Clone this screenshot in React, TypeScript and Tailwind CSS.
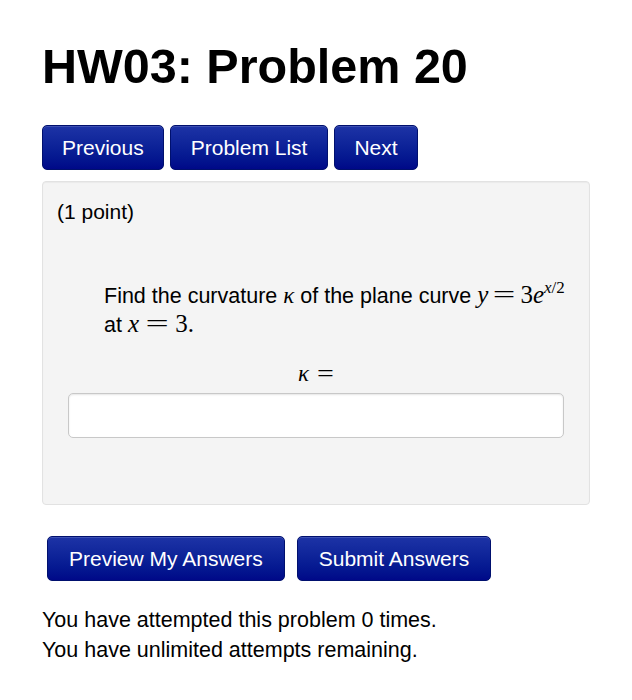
import React from "react";

const btn =
  "h-[45px] rounded-[5px] border border-[#00106e] bg-gradient-to-b from-[#1d33a6] to-[#000888] text-white text-[21px] leading-none flex items-center shadow-[inset_0_1px_0_rgba(255,255,255,0.15)]";

const serif = { fontFamily: '"Liberation Serif", "Times New Roman", serif' };

function Eq({ mx, scale }: { mx: string; scale: string }) {
  return <span className={"inline-block origin-center " + mx + " " + scale}>=</span>;
}

export default function App() {
  return (
    <div
      className="w-[632px] h-[700px] bg-white text-black pl-[42px] pt-[40px]"
      style={{ fontFamily: '"Liberation Sans", Arial, sans-serif' }}
    >
      <h1 className="text-[48.5px] font-bold leading-[53px]">HW03: Problem 20</h1>

      <div className="flex gap-[6px] mt-[32px]">
        <button className={btn + " px-[19px]"}>Previous</button>
        <button className={btn + " px-[20px]"}>Problem List</button>
        <button className={btn + " px-[19px]"}>Next</button>
      </div>

      <div className="mt-[11px] w-[548px] h-[324px] bg-[#f4f4f4] border border-[#e2e2e2] rounded-[4px] px-[14px] pt-[15px] shadow-[inset_0_1px_1px_rgba(0,0,0,0.04)]">
        <div className="text-[21px] leading-[30px]">(1 point)</div>

        <div className="mt-[55px] ml-[47px] text-[21.5px] leading-[29px] whitespace-nowrap">
          <div className="h-[29px] flex items-baseline">
            <span>Find the curvature&nbsp;</span>
            <span className="italic text-[23px] leading-none" style={serif}>κ</span>
            <span>&nbsp;of the plane curve&nbsp;</span>
            <span className="text-[25px] leading-none" style={serif}>
              <span className="italic">y</span>
              <Eq mx="mx-[9px]" scale="scale-x-[1.6]" />
              <span>3</span>
              <span className="italic">e</span>
              <span className="text-[17px] relative -top-[10px]">
                <span className="italic">x</span>/2
              </span>
            </span>
          </div>
          <div className="h-[29px] flex items-baseline">
            <span>at&nbsp;</span>
            <span className="text-[25px] leading-none" style={serif}>
              <span className="italic">x</span>
              <Eq mx="mx-[11px]" scale="scale-x-[1.65]" />
              <span>3.</span>
            </span>
          </div>
        </div>

        <div className="mt-[19px] h-[30px] flex items-baseline justify-center text-[23px] leading-[30px]" style={serif}>
          <span className="italic">κ</span>
          <Eq mx="ml-[10px] mr-[2px]" scale="scale-x-[1.3]" />
        </div>

        <div className="mx-auto mt-[4px] w-[496px] h-[45px] bg-white border border-[#c8c8c8] rounded-[5px] shadow-[inset_0_1px_2px_rgba(0,0,0,0.1)]" />
      </div>

      <div className="flex gap-[12px] mt-[31px] ml-[5px]">
        <button className={btn + " px-[21px]"}>Preview My Answers</button>
        <button className={btn + " px-[21px]"}>Submit Answers</button>
      </div>

      <div className="mt-[24px] text-[21.5px] leading-[30px]">
        <div>You have attempted this problem 0 times.</div>
        <div>You have unlimited attempts remaining.</div>
      </div>
    </div>
  );
}
